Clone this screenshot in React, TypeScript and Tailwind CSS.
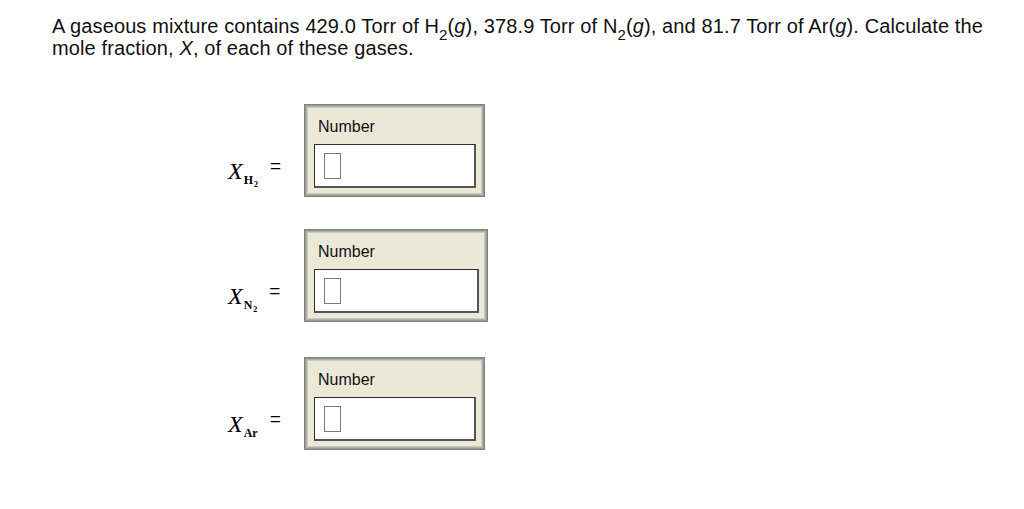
import React from "react";

type Gas = { sym: string; sub: boolean; boxW: string; gap: string };

const gases: Gas[] = [
  { sym: "H", sub: true, boxW: "w-[181px]", gap: "" },
  { sym: "N", sub: true, boxW: "w-[184px]", gap: "mt-[32px]" },
  { sym: "Ar", sub: false, boxW: "w-[181px]", gap: "mt-[35px]" },
];

function Sub({ children }: { children: React.ReactNode }) {
  return <sub className="text-[15px] align-[-3px]">{children}</sub>;
}

// Mole fraction symbol: italic X with a bold formula subscript, then "="
function Label({ sym, sub }: { sym: string; sub: boolean }) {
  return (
    <div className="w-[76px] h-[93px] shrink-0 pt-[50px] leading-[24px] whitespace-nowrap text-black">
      <span className="font-['Liberation_Serif',serif] italic text-[24px]">X</span>
      <span className="font-['Liberation_Serif',serif] font-bold text-[12px] align-[-5px] ml-[1px]">
        {sym}
        {sub && <span className="text-[8px] align-[-3px] ml-[1px]">2</span>}
      </span>
      <span className="font-['Liberation_Sans',sans-serif] text-[19px] align-[7px] ml-[12px]">=</span>
    </div>
  );
}

function NumberBox({ w }: { w: string }) {
  return (
    <div
      className={`${w} h-[93px] bg-[#ebe8d8] border border-[#7d827d] shadow-[inset_0_0_0_1px_#979b94,inset_0_0_0_2px_#aeb1a8,inset_0_0_0_3px_#c9cbbe] pt-[12px] pl-[9px] pr-[8px]`}
    >
      <div className="font-['Liberation_Sans',sans-serif] text-[16px] leading-[20px] text-[#111] pl-[4px]">Number</div>
      <div className="mt-[7px] h-[44px] bg-white border border-[#2e2e2e] border-r-2 border-b-2 border-r-[#555] border-b-[#555] pl-[9px] pt-[8px]">
        <div className="w-[17px] h-[26px] border border-[#7a7a7a] bg-white" />
      </div>
    </div>
  );
}

export default function App() {
  return (
    <div className="w-[1024px] h-[509px] bg-white overflow-hidden">
      <p className="pl-[52px] pt-[15px] font-['Liberation_Sans',sans-serif] text-[20px] leading-[22px] tracking-[0.12px] text-[#111]">
        A gaseous mixture contains 429.0 Torr of H<Sub>2</Sub>(<i>g</i>), 378.9 Torr of N<Sub>2</Sub>(<i>g</i>), and
        81.7 Torr of Ar(<i>g</i>). Calculate the
        <br />
        mole fraction, <i>X</i>, of each of these gases.
      </p>
      <div className="flex flex-col pl-[228px] pt-[45px]">
        {gases.map((g) => (
          <div key={g.sym} className={`flex items-start ${g.gap}`}>
            <Label sym={g.sym} sub={g.sub} />
            <NumberBox w={g.boxW} />
          </div>
        ))}
      </div>
    </div>
  );
}
